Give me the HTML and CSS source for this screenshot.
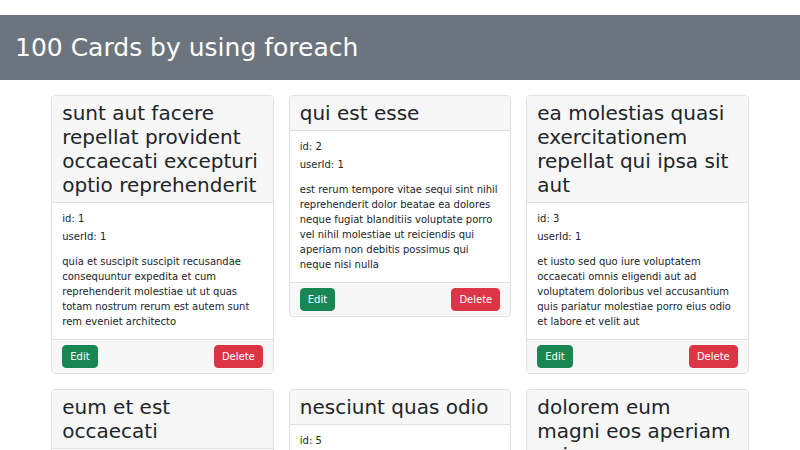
FILE: index.html
```html
<!DOCTYPE html>
<html lang="en">
<head>
<meta charset="utf-8">
<title>100 Cards by using foreach</title>
<link rel="stylesheet" href="styles.css">
</head>
<body>
<header class="topbar">
  <h1 class="topbar-title">100 Cards by using foreach</h1>
</header>
<main class="container">
  <div class="card-grid">
    <div class="card">
      <div class="card-header"><h5 class="card-title">sunt aut facere repellat provident occaecati excepturi optio reprehenderit</h5></div>
      <div class="card-body">
        <p class="meta meta-id">id: 1</p>
        <p class="meta meta-user">userId: 1</p>
        <p class="card-text">quia et suscipit suscipit recusandae consequuntur expedita et cum reprehenderit molestiae ut ut quas totam nostrum rerum est autem sunt rem eveniet architecto</p>
      </div>
      <div class="card-footer"><button class="btn btn-edit">Edit</button><button class="btn btn-delete">Delete</button></div>
    </div>
    <div class="card">
      <div class="card-header"><h5 class="card-title">qui est esse</h5></div>
      <div class="card-body">
        <p class="meta meta-id">id: 2</p>
        <p class="meta meta-user">userId: 1</p>
        <p class="card-text">est rerum tempore vitae sequi sint nihil reprehenderit dolor beatae ea dolores neque fugiat blanditiis voluptate porro vel nihil molestiae ut reiciendis qui aperiam non debitis possimus qui neque nisi nulla</p>
      </div>
      <div class="card-footer"><button class="btn btn-edit">Edit</button><button class="btn btn-delete">Delete</button></div>
    </div>
    <div class="card">
      <div class="card-header"><h5 class="card-title">ea molestias quasi exercitationem repellat qui ipsa sit aut</h5></div>
      <div class="card-body">
        <p class="meta meta-id">id: 3</p>
        <p class="meta meta-user">userId: 1</p>
        <p class="card-text">et iusto sed quo iure voluptatem occaecati omnis eligendi aut ad voluptatem doloribus vel accusantium quis pariatur molestiae porro eius odio et labore et velit aut</p>
      </div>
      <div class="card-footer"><button class="btn btn-edit">Edit</button><button class="btn btn-delete">Delete</button></div>
    </div>
    <div class="card">
      <div class="card-header"><h5 class="card-title">eum et est occaecati</h5></div>
      <div class="card-body">
        <p class="meta meta-id">id: 4</p>
        <p class="meta meta-user">userId: 1</p>
        <p class="card-text">ullam et saepe reiciendis voluptatem adipisci sit amet autem assumenda provident rerum culpa quis hic commodi nesciunt rem tenetur doloremque ipsam iure quis sunt voluptatem rerum illo velit</p>
      </div>
      <div class="card-footer"><button class="btn btn-edit">Edit</button><button class="btn btn-delete">Delete</button></div>
    </div>
    <div class="card">
      <div class="card-header"><h5 class="card-title">nesciunt quas odio</h5></div>
      <div class="card-body">
        <p class="meta meta-id">id: 5</p>
        <p class="meta meta-user">userId: 1</p>
        <p class="card-text">repudiandae veniam quaerat sunt sed alias aut fugiat sit autem sed est voluptatem omnis possimus esse voluptatibus quis est aut tenetur dolor neque</p>
      </div>
      <div class="card-footer"><button class="btn btn-edit">Edit</button><button class="btn btn-delete">Delete</button></div>
    </div>
    <div class="card">
      <div class="card-header"><h5 class="card-title">dolorem eum magni eos aperiam quia</h5></div>
      <div class="card-body">
        <p class="meta meta-id">id: 6</p>
        <p class="meta meta-user">userId: 1</p>
        <p class="card-text">ut aspernatur corporis harum nihil quis provident sequi mollitia nobis aliquid molestiae perspiciatis et ea nemo ab reprehenderit accusantium quas voluptate dolores velit et doloremque molestiae</p>
      </div>
      <div class="card-footer"><button class="btn btn-edit">Edit</button><button class="btn btn-delete">Delete</button></div>
    </div>
  </div>
</main>
</body>
</html>
```
FILE: styles.css
```css
* { box-sizing: border-box; }

body {
  margin: 0;
  font-family: "DejaVu Sans", sans-serif;
  font-size: 10px;
  line-height: 1.5;
  color: #212529;
  background: #ffffff;
}

.topbar {
  margin-top: 15px;
  height: 65px;
  background: #6c757d;
  display: flex;
  align-items: center;
  padding: 0 15px;
}

.topbar-title {
  margin: 0;
  font-size: 25px;
  font-weight: 400;
  line-height: 1.2;
  color: #ffffff;
}

.container {
  width: 697.5px;
  margin: 15px auto 0;
}

.card-grid {
  display: grid;
  grid-template-columns: repeat(3, 1fr);
  gap: 15px;
  align-items: start;
}

.card {
  border: 1px solid #e0e0e0;
  border-radius: 4px;
  background: #ffffff;
  overflow: hidden;
}

.card-header {
  background: #f7f7f7;
  border-bottom: 1px solid #e0e0e0;
  padding: 5px 10px;
}

.card-title {
  margin: 0;
  font-size: 20px;
  font-weight: 400;
  line-height: 24px;
}

.card-body {
  padding: 10px;
}

.meta {
  margin: 0;
  line-height: 12px;
}

.meta-id { margin-bottom: 6px; }
.meta-user { margin-bottom: 11px; }

.card-text {
  margin: 0;
  line-height: 15px;
}

.card-footer {
  background: #f7f7f7;
  border-top: 1px solid #e0e0e0;
  padding: 5px 10px;
  display: flex;
  justify-content: space-between;
}

.btn {
  font-family: "DejaVu Sans", sans-serif;
  font-size: 10px;
  line-height: 15px;
  padding: 3px 7px;
  border: 1px solid transparent;
  border-radius: 4px;
  color: #ffffff;
}

.btn-edit {
  background: #198754;
  border-color: #198754;
}

.btn-delete {
  background: #dc3545;
  border-color: #dc3545;
}
```
